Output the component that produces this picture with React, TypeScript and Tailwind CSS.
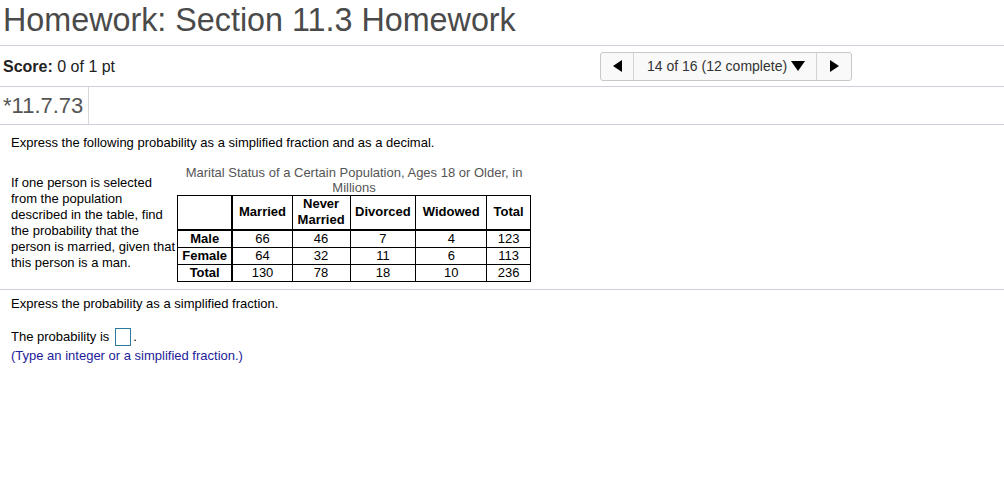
import React from 'react';

const rows = [
  { label: 'Male', values: [66, 46, 7, 4, 123] },
  { label: 'Female', values: [64, 32, 11, 6, 113] },
  { label: 'Total', values: [130, 78, 18, 10, 236] },
];

const colWidths = ['w-[55px]', 'w-[60px]', 'w-[58px]', 'w-[66px]', 'w-[71px]', 'w-[44px]'];

function TriLeft() {
  return (
    <svg width="9" height="12" viewBox="0 0 9 12">
      <path d="M9 0 L0 6 L9 12 Z" fill="#000" />
    </svg>
  );
}

function TriRight() {
  return (
    <svg width="9" height="12" viewBox="0 0 9 12">
      <path d="M0 0 L9 6 L0 12 Z" fill="#000" />
    </svg>
  );
}

function TriDown() {
  return (
    <svg width="14" height="10" viewBox="0 0 14 10">
      <path d="M0 0 L14 0 L7 10 Z" fill="#000" />
    </svg>
  );
}

function DataTable() {
  return (
    <table className="border-collapse border border-black text-[13px] leading-[16px] text-black">
      <thead>
        <tr className="h-[34px] border-b-2 border-black">
          <th className={`${colWidths[0]} border-r-2 border-black`}></th>
          <th className={`${colWidths[1]} border-r border-black font-bold`}>Married</th>
          <th className={`${colWidths[2]} border-r border-black font-bold`}>
            Never
            <br />
            Married
          </th>
          <th className={`${colWidths[3]} border-r border-black font-bold`}>Divorced</th>
          <th className={`${colWidths[4]} border-r border-black font-bold`}>Widowed</th>
          <th className={`${colWidths[5]} font-bold`}>Total</th>
        </tr>
      </thead>
      <tbody>
        {rows.map((r) => (
          <tr key={r.label} className="h-[17px] border-b border-black">
            <td className="border-r-2 border-black text-center font-bold">{r.label}</td>
            {r.values.map((v, i) => (
              <td key={i} className={`text-center ${i < 4 ? 'border-r border-black' : ''}`}>
                {v}
              </td>
            ))}
          </tr>
        ))}
      </tbody>
    </table>
  );
}

export default function App() {
  return (
    <div className="h-[485px] w-full overflow-hidden bg-white font-['Liberation_Sans',Arial,sans-serif] text-black">
      <div className="h-[46px] border-b border-[#ccd0dc] px-[3px]">
        <h1 className="text-[32.3px] leading-[40px] text-[#4a4a4a]">Homework: Section 11.3 Homework</h1>
      </div>

      <div className="flex h-[41px] items-center justify-between border-b border-[#ccd0dc] pl-[3px] pr-[152px]">
        <div className="mt-[2px] text-[16px] text-[#222]">
          <span className="font-bold">Score:</span> 0 of 1 pt
        </div>
        <div className="flex h-[29px] items-stretch rounded-[3px] border border-[#c8c8c8] bg-[#f9f9f9] text-[14px] text-[#333]">
          <button className="flex w-[33px] items-center justify-center border-r border-[#d4d4d4]">
            <TriLeft />
          </button>
          <div className="flex w-[183px] items-center gap-[4px] border-r border-[#d4d4d4] pl-[13px]">
            <span>14 of 16 (12 complete)</span>
            <TriDown />
          </div>
          <button className="flex w-[34px] items-center justify-center">
            <TriRight />
          </button>
        </div>
      </div>

      <div className="flex h-[38px] border-b border-[#ccd0dc]">
        <div className="flex items-center border-r border-[#d8d8d8] pl-[3px] pr-[5px] text-[22px] text-[#555]">*11.7.73</div>
      </div>

      <div className="pl-[11px] pt-[10px] text-[13px] leading-[16px]">
        <p>Express the following probability as a simplified fraction and as a decimal.</p>

        <div className="mt-[14px] flex">
          <p className="mt-[10px] w-[166px] shrink-0">
            If one person is selected from the population described in the table, find the probability that
            the person is married, given that this person is a man.
          </p>
          <div className="w-[354px]">
            <p className="px-[4px] text-center text-[13px] leading-[15px] text-[#555]">
              Marital Status of a Certain Population, Ages 18 or Older, in Millions
            </p>
            <DataTable />
          </div>
        </div>
      </div>

      <div className="mt-[7px] border-t border-[#ccd0dc] pl-[11px] pt-[6px] text-[13px] leading-[16px]">
        <p>Express the probability as a simplified fraction.</p>
        <div className="mt-[16px] flex items-center">
          <span>The probability is</span>
          <span className="ml-[6px] inline-block h-[18px] w-[16px] border-[1.5px] border-[#2a7aa0]"></span>
          <span className="ml-[2px]">.</span>
        </div>
        <p className="mt-[2px] text-[#22229a]">(Type an integer or a simplified fraction.)</p>
      </div>
    </div>
  );
}
